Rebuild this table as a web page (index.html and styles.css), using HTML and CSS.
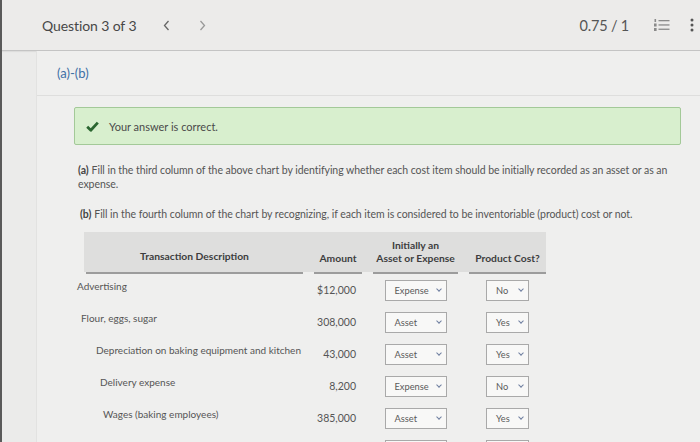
FILE: index.html
```html
<!DOCTYPE html>
<html>
<head>
<meta charset="utf-8">
<link rel="stylesheet" href="styles.css">
</head>
<body>
<div class="frame">
  <header class="topbar">
    <div class="qnav">
      <span class="qtitle">Question 3 of 3</span>
      <svg class="chev" width="7" height="11" viewBox="0 0 7 11"><path d="M5.5 1 L1.5 5.5 L5.5 10" fill="none" stroke="#666" stroke-width="1.3"/></svg>
      <svg class="chev next" width="7" height="11" viewBox="0 0 7 11"><path d="M1.5 1 L5.5 5.5 L1.5 10" fill="none" stroke="#999" stroke-width="1.3"/></svg>
    </div>
    <div class="qright">
      <span class="score">0.75 / 1</span>
      <svg class="listicon" width="16" height="14" viewBox="0 0 16 14">
        <g fill="#8a8a8a">
          <rect x="0.5" y="1" width="1.6" height="3"/>
          <rect x="0" y="5.5" width="2.6" height="3" />
          <rect x="0" y="10" width="2.6" height="3"/>
          <rect x="4.5" y="2" width="11" height="1.3"/>
          <rect x="4.5" y="6.3" width="11" height="1.3"/>
          <rect x="4.5" y="10.6" width="11" height="1.3"/>
        </g>
      </svg>
      <svg class="kebab" width="4" height="14" viewBox="0 0 4 14"><g fill="#555"><circle cx="2" cy="2" r="1.5"/><circle cx="2" cy="7" r="1.5"/><circle cx="2" cy="12" r="1.5"/></g></svg>
    </div>
  </header>
  <main class="panel">
    <div class="parthead">(a)-(b)</div>
    <div class="body">
      <div class="correct">
        <svg class="check" width="13" height="11" viewBox="0 0 13 11"><path d="M1.2 5.8 L4.8 9.2 L11.8 1.6" fill="none" stroke="#2a6630" stroke-width="2.8" stroke-linejoin="round"/></svg>
        <span>Your answer is correct.</span>
      </div>
      <p class="qa"><span class="line"><b class="tag">(a)</b>Fill in the third column of the above chart by identifying whether each cost item should be initially recorded as an asset or as an</span><span class="line">expense.</span></p>
      <p class="qb"><b class="tag">(b)</b>Fill in the fourth column of the chart by recognizing, if each item is considered to be inventoriable (product) cost or not.</p>

      <div class="table">
        <div class="thead">
          <div class="th desc">Transaction Description</div>
          <div class="th amt">Amount</div>
          <div class="th ae">Initially an<br>Asset or Expense</div>
          <div class="th pc">Product Cost?</div>
        </div>
        <div class="row">
          <div class="td desc">Advertising</div>
          <div class="td amt">$12,000</div>
          <div class="td ae"><div class="sel wide"><span>Expense</span><i></i></div></div>
          <div class="td pc"><div class="sel narrow"><span>No</span><i></i></div></div>
        </div>
        <div class="row">
          <div class="td desc">Flour, eggs, sugar</div>
          <div class="td amt">308,000</div>
          <div class="td ae"><div class="sel wide"><span>Asset</span><i></i></div></div>
          <div class="td pc"><div class="sel narrow"><span>Yes</span><i></i></div></div>
        </div>
        <div class="row">
          <div class="td desc">Depreciation on baking equipment and kitchen</div>
          <div class="td amt">43,000</div>
          <div class="td ae"><div class="sel wide"><span>Asset</span><i></i></div></div>
          <div class="td pc"><div class="sel narrow"><span>Yes</span><i></i></div></div>
        </div>
        <div class="row">
          <div class="td desc">Delivery expense</div>
          <div class="td amt">8,200</div>
          <div class="td ae"><div class="sel wide"><span>Expense</span><i></i></div></div>
          <div class="td pc"><div class="sel narrow"><span>No</span><i></i></div></div>
        </div>
        <div class="row">
          <div class="td desc">Wages (baking employees)</div>
          <div class="td amt">385,000</div>
          <div class="td ae"><div class="sel wide"><span>Asset</span><i></i></div></div>
          <div class="td pc"><div class="sel narrow"><span>Yes</span><i></i></div></div>
        </div>
        <div class="row">
          <div class="td desc"></div>
          <div class="td amt"></div>
          <div class="td ae"><div class="sel wide"><span></span><i></i></div></div>
          <div class="td pc"><div class="sel narrow"><span></span><i></i></div></div>
        </div>
      </div>
    </div>
  </main>
</div>
</body>
</html>
```
FILE: styles.css
```css
* { box-sizing: border-box; }
html, body { margin: 0; padding: 0; }
body {
  width: 700px;
  height: 442px;
  overflow: hidden;
  background: #ebebea;
  font-family: Lato, "Open Sans", sans-serif;
  color: #444;
}
.frame {
  border-left: 2px solid #5a5a5a;
  height: 442px;
  overflow: hidden;
}
.topbar {
  height: 51px;
  display: flex;
  align-items: center;
  justify-content: space-between;
  padding: 0 0 0 40px;
  background: #ecebea;
  border-bottom: 1px solid #c4c4c4;
  box-shadow: 0 1px 1px rgba(0,0,0,0.06);
}
.qnav { display: flex; align-items: center; }
.qtitle { font-size: 14px; color: #474747; letter-spacing: -0.1px; }
.chev { margin-left: 27px; }
.chev.next { margin-left: 29px; }
.qright { display: flex; align-items: center; padding-right: 6px; }
.score { font-size: 14.5px; color: #555; letter-spacing: -0.2px; }
.listicon { margin-left: 25px; }
.kebab { margin-left: 20px; }

.panel {
  margin-left: 34px;
  background: #efefee;
  border-left: 1px solid #e2e2e1;
  height: 391px;
}
.parthead {
  height: 45px;
  padding: 14px 0 0 20px;
  font-size: 13px;
  color: #3e6fa6;
  border-bottom: 1px solid #dededd;
}
.body { padding: 11px 0 0 37px; }
.correct {
  width: 607px;
  height: 38px;
  background: #d8efce;
  border: 1px solid #a3c998;
  border-radius: 2px;
  display: flex;
  align-items: center;
  padding-left: 11px;
  font-size: 11px;
  color: #4a4a4a;
}
.check { margin-right: 10px; }
.qa {
  margin: 18px 0 0 4px;
  width: 603px;
  font-size: 10.5px;
  line-height: 14px;
  color: #555;
  letter-spacing: -0.05px;
}
.qa .line { display: block; white-space: nowrap; }
.tag { font-weight: 700; color: #444; margin-right: 3px; }
.qb {
  margin: 16px 0 0 6px;
  font-size: 10.5px;
  line-height: 14px;
  color: #555;
  letter-spacing: -0.05px;
}

.table { margin: 11px 0 0 10px; width: 462px; }
.thead, .row {
  display: grid;
  grid-template-columns: 217px 48px 85px 77px;
  column-gap: 11px;
  padding-left: 2px;
}
.thead {
  height: 40px;
  background: #dededd;
  align-items: end;
}
.th {
  font-size: 10.3px;
  font-weight: 700;
  color: #3d3d3d;
  text-align: center;
  line-height: 13px;
  padding-bottom: 7px;
  border-bottom: 2px solid #9c9c9c;
  margin-bottom: -2px;
}
.th.desc { padding-bottom: 9px; }
.row { height: 32px; align-items: center; }
.thead + .row { margin-top: 2px; }
.td { font-size: 10px; color: #555; }
.td.desc { position: relative; top: -4px; white-space: nowrap; }
.row:nth-child(2) .td.desc { margin-left: -9px; }
.row:nth-child(3) .td.desc { margin-left: -5px; }
.row:nth-child(4) .td.desc { margin-left: 10px; }
.row:nth-child(5) .td.desc { margin-left: 14px; }
.row:nth-child(6) .td.desc { margin-left: 17px; }
.td.amt { text-align: right; padding-right: 6px; font-size: 10.5px; }
.td.ae, .td.pc { display: flex; justify-content: center; }
.sel {
  height: 21px;
  border: 1px solid #a9a9a9;
  background: #f8f8f7;
  display: flex;
  align-items: center;
  justify-content: space-between;
  padding: 0 5px 0 9px;
  font-size: 9.3px;
  color: #5a5a5a;
}
.sel.wide { width: 62px; }
.sel.narrow { width: 43px; padding-left: 9px; }
.sel i {
  width: 4px;
  height: 4px;
  border-right: 1.3px solid #6f7fa0;
  border-bottom: 1.3px solid #6f7fa0;
  transform: rotate(45deg);
  margin-top: -2px;
}
```
